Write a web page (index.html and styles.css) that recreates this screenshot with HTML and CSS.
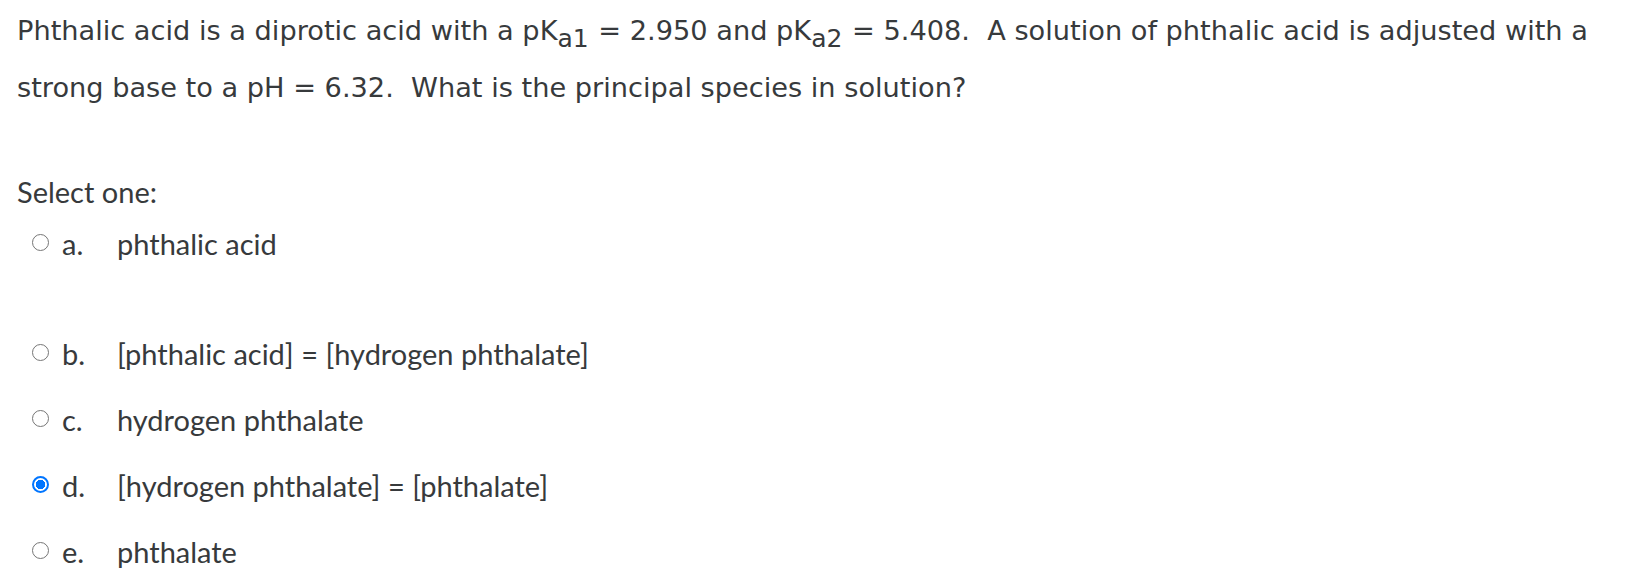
FILE: index.html
```html
<!DOCTYPE html>
<html>
<head>
<meta charset="utf-8">
<link rel="stylesheet" href="styles.css">
</head>
<body>
<div class="que">
  <div class="qtext">
    <p>Phthalic acid is a diprotic acid with a pK<sub>a1</sub> = 2.950 and pK<sub>a2</sub> = 5.408.&nbsp; A solution of phthalic acid is adjusted with a strong base to a pH = 6.32.&nbsp; What is the principal species in solution?</p>
  </div>
  <div class="ablock">
    <div class="prompt">Select one:</div>
    <div class="answer">
      <div class="opt opt-tall">
        <span class="radio"></span>
        <span class="letter">a.</span>
        <span class="label">phthalic acid</span>
      </div>
      <div class="opt">
        <span class="radio"></span>
        <span class="letter">b.</span>
        <span class="label">[phthalic acid] = [hydrogen phthalate]</span>
      </div>
      <div class="opt">
        <span class="radio"></span>
        <span class="letter">c.</span>
        <span class="label">hydrogen phthalate</span>
      </div>
      <div class="opt">
        <span class="radio checked"></span>
        <span class="letter">d.</span>
        <span class="label">[hydrogen phthalate] = [phthalate]</span>
      </div>
      <div class="opt">
        <span class="radio"></span>
        <span class="letter">e.</span>
        <span class="label">phthalate</span>
      </div>
    </div>
  </div>
</div>
</body>
</html>
```
FILE: styles.css
```css
html, body {
  margin: 0;
  padding: 0;
  background: #ffffff;
}
.que {
  padding: 0 0 0 17px;
  color: #373a3c;
}
.qtext p {
  margin: 0;
  padding-top: 2px;
  font-family: "DejaVu Sans", Verdana, sans-serif;
  font-size: 27.2px;
  line-height: 57px;
  width: 1590px;
}
.qtext sub {
  font-size: 92%;
  vertical-align: -0.28em;
  line-height: 0;
  margin-right: 1px;
}
.ablock {
  margin-top: 56px;
  font-family: Lato, "Source Sans Pro", sans-serif;
  font-size: 29px;
}
.prompt {
  line-height: 40px;
}
.answer {
  display: flex;
  flex-direction: column;
  margin-top: 12px;
}
.opt {
  display: flex;
  align-items: flex-start;
  height: 66px;
  line-height: 40px;
}
.opt-tall {
  height: 110px;
}
.radio {
  box-sizing: border-box;
  width: 17px;
  height: 17px;
  border: 1.5px solid #767676;
  border-radius: 50%;
  margin: 10px 0 0 15px;
  flex: none;
}
.radio.checked {
  border: 2px solid #0075ff;
  background: radial-gradient(circle, #0075ff 0 4.5px, #ffffff 5px);
}
.letter {
  width: 68px;
  padding-left: 13px;
  box-sizing: border-box;
  flex: none;
}
.label {
  white-space: nowrap;
}
```
